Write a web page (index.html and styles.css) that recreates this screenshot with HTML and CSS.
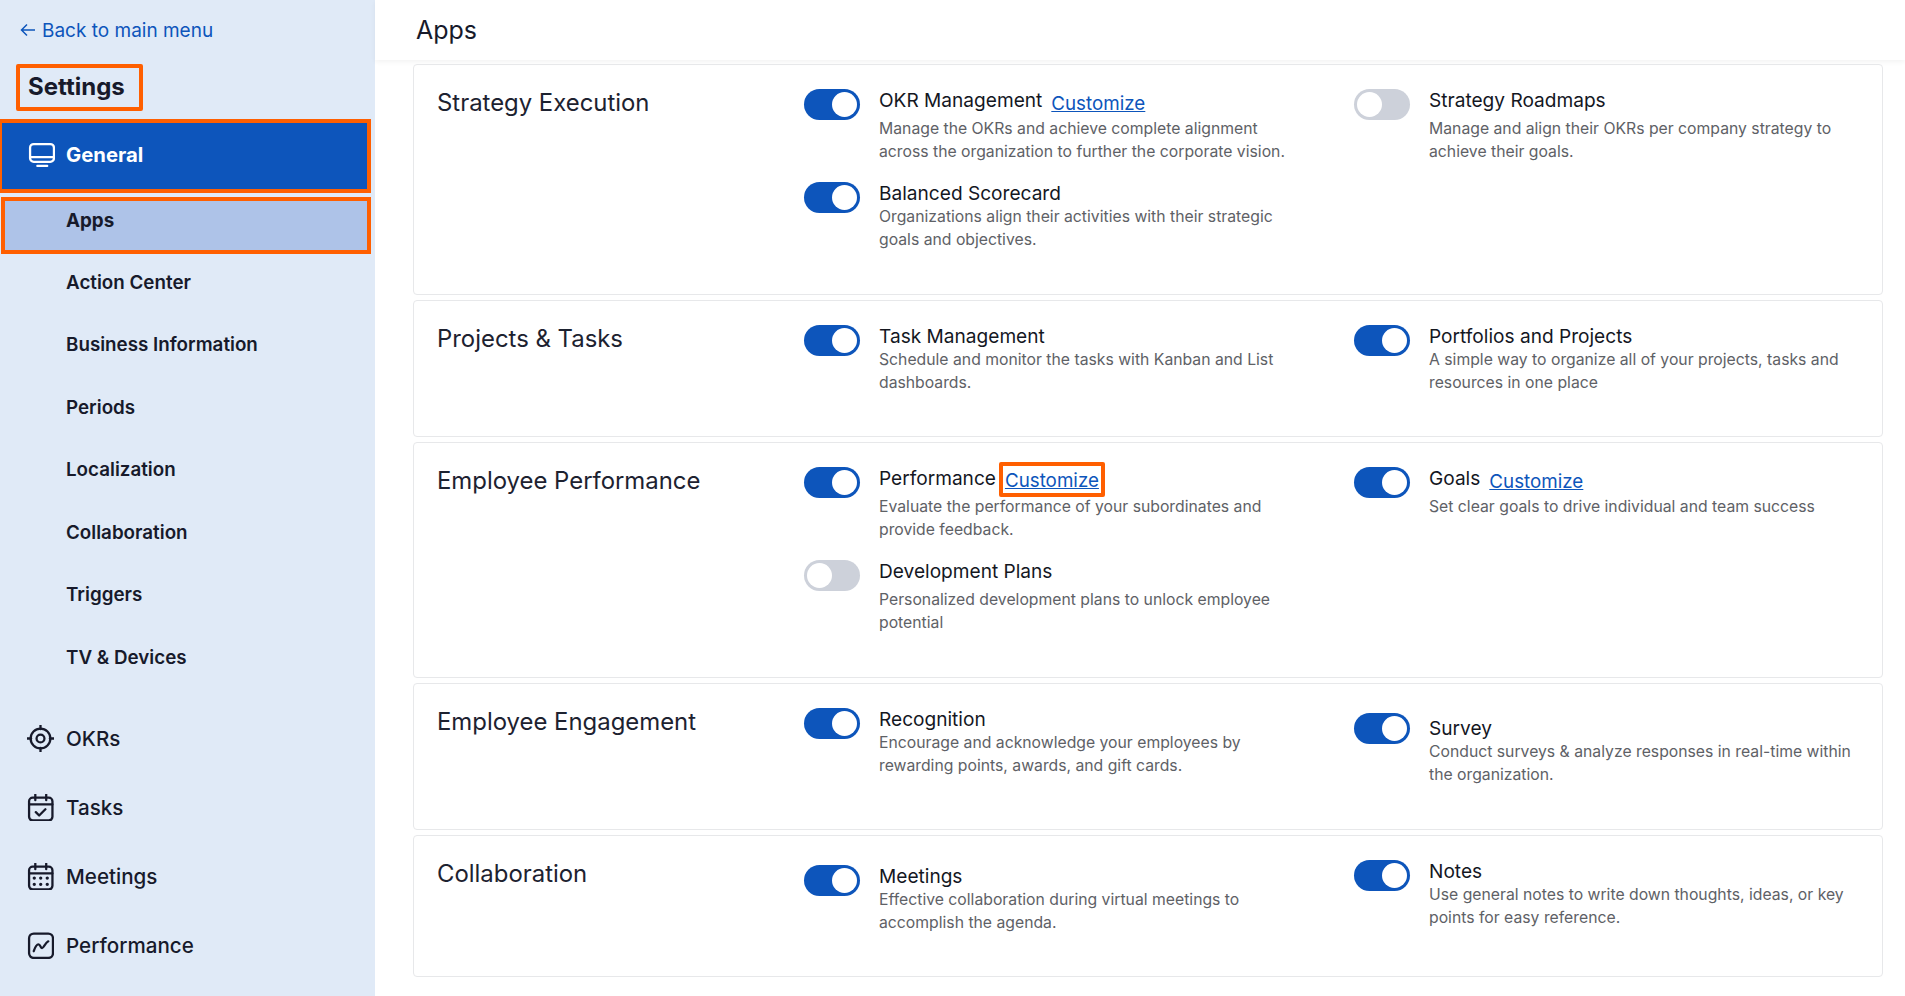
FILE: index.html
```html
<!DOCTYPE html>
<html>
<head>
    <meta charset="UTF-8"/>
    <title>Settings - Apps</title>
    <link rel="stylesheet" href="styles.css">
</head>
<body>
<div class="page">
    <div class="sidebar">
        <a class="back">
            <svg class="back-arrow" viewBox="0 0 16 16"><path d="M15 8H1.500M7 2.500 1.500 8 7 13.500"/></svg>
            Back to main menu
        </a>
        <div class="settings-title">Settings</div>
        <a class="general">
            <svg class="icon" viewBox="0 0 26 26"><rect x="2" y="3" width="23" height="17" rx="3.500"/><path d="M2 15.500h23M9 24h9.500"/></svg>
            General
        </a>
        <div class="sub-list">
            <a class="sub sub-active">Apps</a>
            <a class="sub">Action Center</a>
            <a class="sub">Business Information</a>
            <a class="sub">Periods</a>
            <a class="sub">Localization</a>
            <a class="sub">Collaboration</a>
            <a class="sub">Triggers</a>
            <a class="sub">TV &amp; Devices</a>
        </div>
        <div class="main-list">
            <a class="main-item">
                <svg class="icon" viewBox="0 0 26 26"><circle cx="13" cy="13" r="9.500"/><circle cx="13" cy="13" r="3.800"/><path d="M13 0v4M13 22v4M0 13h4M22 13h4"/></svg>
                OKRs
            </a>
            <a class="main-item">
                <svg class="icon" viewBox="0 0 26 26"><rect x="2" y="3.500" width="22.500" height="22" rx="3.500"/><path d="M2 10h22.500M8 .5v5.500M18.500 .5v5.500M8.500 17.500l3.200 3.200 6-6"/></svg>
                Tasks
            </a>
            <a class="main-item">
                <svg class="icon" viewBox="0 0 26 26"><rect x="2" y="3.500" width="22.500" height="22" rx="3.500"/><path d="M2 10h22.500M8 .5v5.500M18.500 .5v5.500"/><path class="dots" d="M7 14.500h.01M13.200 14.500h.01M19.500 14.500h.01M7 20.500h.01M13.200 20.500h.01M19.500 20.500h.01"/></svg>
                Meetings
            </a>
            <a class="main-item">
                <svg class="icon" viewBox="0 0 26 26"><rect x="2" y="1.500" width="23" height="23.500" rx="4.500"/><path d="M6.500 18.500c1-3 2.500-6.500 4.500-6.500s2 3.500 3.500 3.500 3-5 6-6.500"/></svg>
                Performance
            </a>
        </div>
    </div>

    <div class="content">
        <div class="topbar">Apps</div>
        <div class="cards">
            <div class="card">
                <div class="card-title">Strategy Execution</div>
                <div class="col">
                    <div class="app">
                        <span class="toggle on"></span>
                        <div class="app-text">
                            <div class="app-name tall">OKR Management <a class="customize">Customize</a></div>
                            <div class="app-desc">Manage the OKRs and achieve complete alignment across the organization to further the corporate vision.</div>
                        </div>
                    </div>
                    <div class="app">
                        <span class="toggle on"></span>
                        <div class="app-text">
                            <div class="app-name">Balanced Scorecard</div>
                            <div class="app-desc">Organizations align their activities with their strategic goals and objectives.</div>
                        </div>
                    </div>
                </div>
                <div class="col">
                    <div class="app">
                        <span class="toggle"></span>
                        <div class="app-text">
                            <div class="app-name tall">Strategy Roadmaps</div>
                            <div class="app-desc">Manage and align their OKRs per company strategy to achieve their goals.</div>
                        </div>
                    </div>
                </div>
            </div>

            <div class="card">
                <div class="card-title">Projects &amp; Tasks</div>
                <div class="col">
                    <div class="app">
                        <span class="toggle on"></span>
                        <div class="app-text">
                            <div class="app-name">Task Management</div>
                            <div class="app-desc">Schedule and monitor the tasks with Kanban and List dashboards.</div>
                        </div>
                    </div>
                </div>
                <div class="col">
                    <div class="app">
                        <span class="toggle on"></span>
                        <div class="app-text">
                            <div class="app-name">Portfolios and Projects</div>
                            <div class="app-desc">A simple way to organize all of your projects, tasks and resources in one place</div>
                        </div>
                    </div>
                </div>
            </div>

            <div class="card">
                <div class="card-title">Employee Performance</div>
                <div class="col">
                    <div class="app">
                        <span class="toggle on"></span>
                        <div class="app-text">
                            <div class="app-name tall">Performance <a class="customize boxed">Customize</a></div>
                            <div class="app-desc">Evaluate the performance of your subordinates and provide feedback.</div>
                        </div>
                    </div>
                    <div class="app">
                        <span class="toggle"></span>
                        <div class="app-text">
                            <div class="app-name tall">Development Plans</div>
                            <div class="app-desc">Personalized development plans to unlock employee potential</div>
                        </div>
                    </div>
                </div>
                <div class="col">
                    <div class="app">
                        <span class="toggle on"></span>
                        <div class="app-text">
                            <div class="app-name tall">Goals <a class="customize">Customize</a></div>
                            <div class="app-desc">Set clear goals to drive individual and team success</div>
                        </div>
                    </div>
                </div>
            </div>

            <div class="card">
                <div class="card-title">Employee Engagement</div>
                <div class="col">
                    <div class="app">
                        <span class="toggle on"></span>
                        <div class="app-text">
                            <div class="app-name">Recognition</div>
                            <div class="app-desc">Encourage and acknowledge your employees by rewarding points, awards, and gift cards.</div>
                        </div>
                    </div>
                </div>
                <div class="col">
                    <div class="app shift">
                        <span class="toggle on"></span>
                        <div class="app-text drop">
                            <div class="app-name">Survey</div>
                            <div class="app-desc">Conduct surveys &amp; analyze responses in real-time within the organization.</div>
                        </div>
                    </div>
                </div>
            </div>

            <div class="card">
                <div class="card-title">Collaboration</div>
                <div class="col">
                    <div class="app shift">
                        <span class="toggle on"></span>
                        <div class="app-text">
                            <div class="app-name">Meetings</div>
                            <div class="app-desc">Effective collaboration during virtual meetings to accomplish the agenda.</div>
                        </div>
                    </div>
                </div>
                <div class="col">
                    <div class="app">
                        <span class="toggle on"></span>
                        <div class="app-text">
                            <div class="app-name">Notes</div>
                            <div class="app-desc">Use general notes to write down thoughts, ideas, or key points for easy reference.</div>
                        </div>
                    </div>
                </div>
            </div>
        </div>
    </div>
</div>
</body>
</html>
```

FILE: styles.css
```css
html, body {
    margin: 0;
    padding: 0;
    height: 100%;
    overflow: hidden;
    background: #fff;
    font-family: Inter, "Noto Sans", sans-serif;
    color: #171a2b;
}

.page {
    display: flex;
    height: 996px;
}

/* sidebar */
.sidebar {
    width: 375px;
    flex: none;
    box-sizing: border-box;
    padding: 19px 0 0;
    background: #e0eaf7;
}

.back {
    display: flex;
    align-items: center;
    gap: 6px;
    height: 22px;
    padding-left: 20px;
    font-size: 19px;
    color: #0d55bb;
}

.back-arrow {
    width: 16px;
    height: 16px;
    fill: none;
    stroke: #0d55bb;
    stroke-width: 1.500;
}

.settings-title {
    box-sizing: border-box;
    width: 127px;
    height: 47px;
    margin: 23px 0 8px 16px;
    padding-left: 8px;
    border: 4px solid #ff5f00;
    border-radius: 2px;
    font-size: 24px;
    font-weight: 700;
    line-height: 38px;
}

.icon {
    width: 27px;
    height: 27px;
    flex: none;
    fill: none;
    stroke: currentColor;
    stroke-width: 2.200;
    stroke-linecap: round;
    stroke-linejoin: round;
}

.icon .dots {
    stroke-width: 3.200;
}

.general {
    box-sizing: border-box;
    display: flex;
    align-items: center;
    gap: 11px;
    width: 371px;
    height: 74px;
    padding-left: 26px;
    padding-bottom: 3px;
    border: 4px solid #ff5f00;
    border-left-width: 2px;
    background: #0d55bb;
    color: #fff;
    font-size: 20.300px;
    font-weight: 700;
}

.sub-list {
    margin-top: 4px;
}

.sub {
    display: flex;
    align-items: center;
    height: 52px;
    margin-bottom: 10.500px;
    padding-left: 66px;
    font-size: 18.800px;
    font-weight: 600;
}

.sub-active {
    box-sizing: border-box;
    width: 370px;
    height: 57px;
    margin-left: 1px;
    margin-bottom: 2px;
    padding-left: 61px;
    padding-bottom: 10px;
    border: 4px solid #ff5f00;
    background: #aec3e8;
    font-weight: 700;
}

.main-list {
    margin-top: 21px;
}

.main-item {
    display: flex;
    align-items: center;
    gap: 12px;
    height: 69px;
    padding-left: 27px;
    font-size: 20.600px;
    font-weight: 500;
}

/* content */
.content {
    flex: 1;
    min-width: 0;
}

.topbar {
    height: 60px;
    padding-left: 41px;
    font-size: 25px;
    line-height: 60px;
    box-shadow: 0 2px 5px rgba(0, 0, 0, 0.05);
}

.cards {
    padding: 4px 22px 0 38px;
}

.card {
    box-sizing: border-box;
    display: grid;
    grid-template-columns: 367px 550px 1fr;
    margin-bottom: 5px;
    padding: 24px 23px 23.700px;
    border: 1px solid #e7e8ea;
    border-radius: 4px;
}

.card-title {
    font-size: 23.900px;
    line-height: 28px;
    color: #1d2230;
}

.app {
    display: flex;
    gap: 19px;
    margin-bottom: 19px;
}

.shift {
    margin-top: 5px;
}

.drop {
    margin-top: 4px;
}

.toggle {
    position: relative;
    flex: none;
    box-sizing: border-box;
    width: 56px;
    height: 31px;
    border-radius: 16px;
    background: #cdd1da;
}

.toggle::after {
    content: "";
    position: absolute;
    left: 3px;
    top: 3px;
    width: 25px;
    height: 25px;
    border-radius: 50%;
    background: #fff;
}

.toggle.on {
    background: #0d55bb;
}

.toggle.on::after {
    left: auto;
    right: 3px;
}

.app-text {
    width: 426px;
}

.app-name {
    display: flex;
    gap: 9px;
    height: 23px;
    font-size: 19.100px;
    line-height: 23px;
    color: #14171f;
}

.app-name.tall {
    height: 28px;
}

.customize {
    height: 28px;
    font-size: 18.800px;
    line-height: 29px;
    color: #0d55bb;
    text-decoration: underline;
}

.boxed {
    box-sizing: border-box;
    margin: -5px 0 0 -6px;
    height: 35px;
    padding: 0 2px;
    border: 4px solid #ff5f00;
    border-radius: 2px;
    line-height: 29px;
}

.app-desc {
    font-size: 15.750px;
    line-height: 23px;
    color: #5e6166;
}
```
